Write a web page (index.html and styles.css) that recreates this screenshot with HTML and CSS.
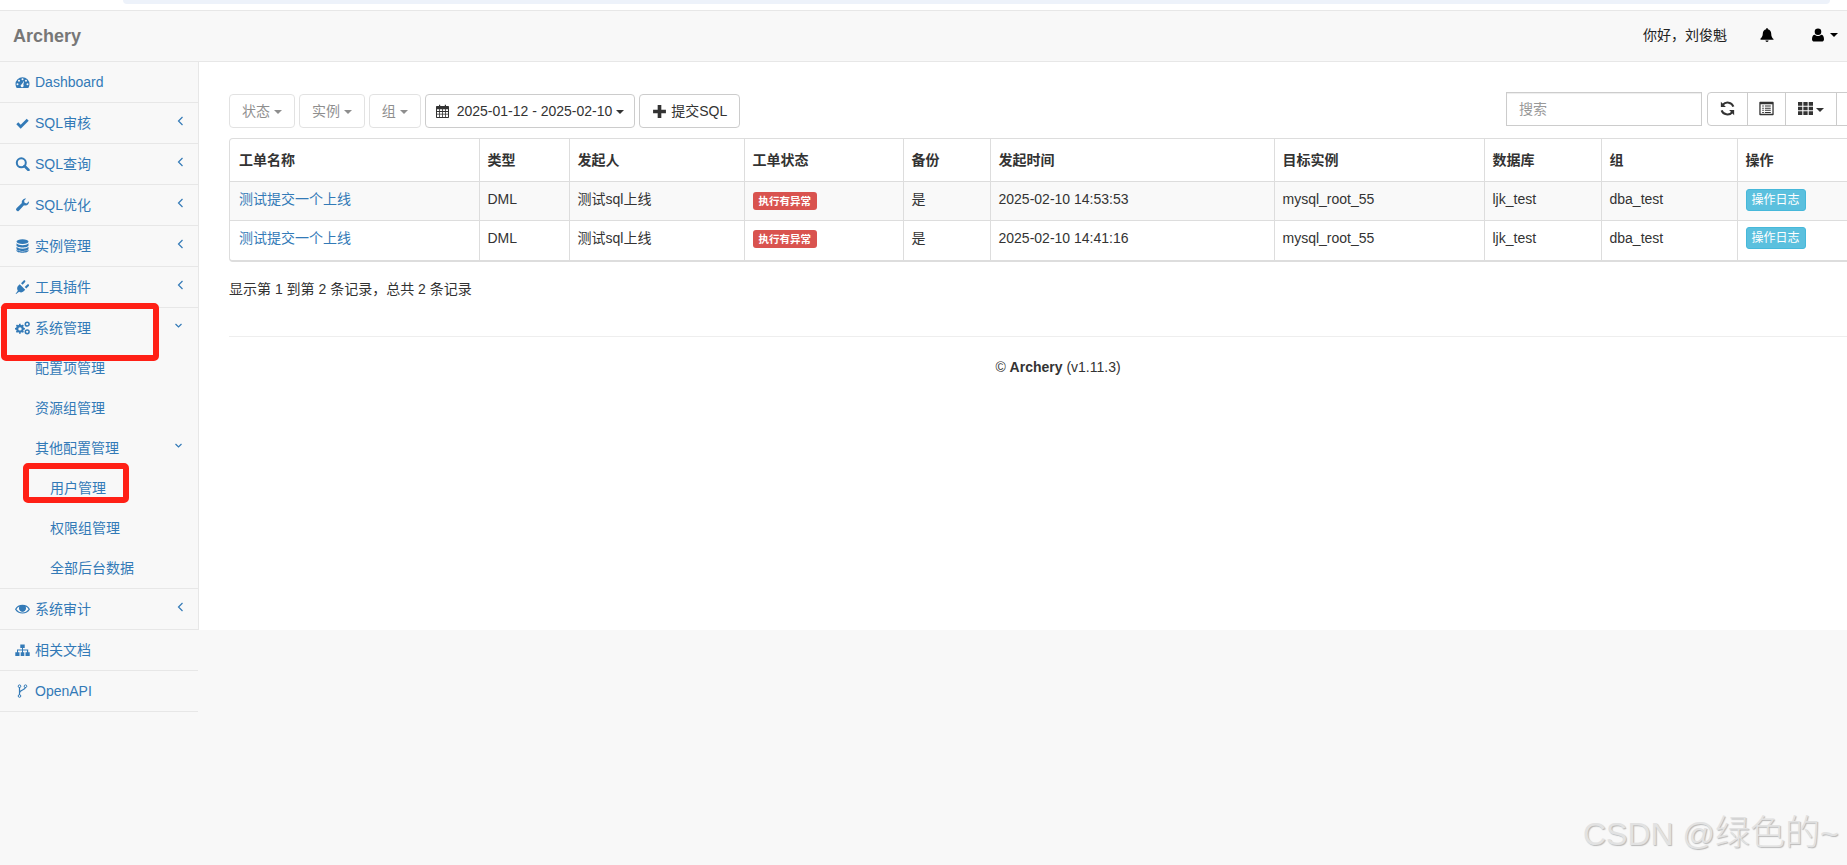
FILE: index.html
```html
<!DOCTYPE html>
<html lang="zh-CN">
<head>
  <meta charset="UTF-8" />
  <title>Archery</title>
  <link rel="stylesheet" href="styles.css">
</head>
<body>
  <svg class="sprite" xmlns="http://www.w3.org/2000/svg">
    <symbol id="i-dash" viewBox="0 0 14 14"><path fill-rule="evenodd" d="M0 9.2a7 7 0 0 1 14 0c0 1.300-.4 2.500-1 3.500-.2.300-.4.300-.7.300H1.700c-.3 0-.5 0-.7-.3-.6-1-1-2.200-1-3.500zM2 8.200a1 1 0 1 0 0 2 1 1 0 0 0 0-2zM3.500 4.800a1 1 0 1 0 0 2 1 1 0 0 0 0-2zM7 3.300a1 1 0 1 0 0 2 1 1 0 0 0 0-2zM10.500 4.800a1 1 0 1 0 0 2 1 1 0 0 0 0-2zM12 8.200a1 1 0 1 0 0 2 1 1 0 0 0 0-2zM8.700 5.500L6.300 9.300a1.500 1.500 0 1 0 1.500.5z"/></symbol>
    <symbol id="i-check" viewBox="0 0 14 14"><path d="M1.800 7.300L5.200 10.700 12.200 3.700" fill="none" stroke="currentColor" stroke-width="2.800"/></symbol>
    <symbol id="i-search" viewBox="0 0 14 14"><circle cx="5.800" cy="5.800" r="4.500" fill="none" stroke="currentColor" stroke-width="2"/><path d="M9 9l4 4" stroke="currentColor" stroke-width="2.500" stroke-linecap="round"/></symbol>
    <symbol id="i-wrench" viewBox="0 0 14 14"><path d="M13.500 3.200c.3 2.300-1.500 4.400-3.800 4.300-.4 0-.8-.1-1.200-.2L3.400 12.700a1.700 1.700 0 0 1-2.400-.1 1.700 1.700 0 0 1 0-2.300l5.400-5.200C5.800 2.700 8 .4 10.600.6l-2 2.200.5 2 2 .6z"/></symbol>
    <symbol id="i-db" viewBox="0 0 14 14"><ellipse cx="7" cy="2.600" rx="6" ry="2.400"/><path d="M1 4.200c1 1.300 3.500 2 6 2s5-.7 6-2v2c0 1.300-2.700 2.300-6 2.300S1 7.500 1 6.200zM1 7.700c1 1.300 3.500 2 6 2s5-.7 6-2v2c0 1.300-2.700 2.300-6 2.300S1 11 1 9.700zM1 10.800c1 1.300 3.500 1.700 6 1.700s5-.4 6-1.700v.7c0 1.300-2.700 2.300-6 2.300s-6-1-6-2.300z"/></symbol>
    <symbol id="i-plug" viewBox="0 0 14 14"><path d="M0 14l2.300-3.300C1.200 9 1.500 7 2.700 5.800l1.500-1.500 5.500 5.500-1.500 1.500c-1.200 1.200-3 1.500-4.600.5L.6 14zM5.500 3.300L8 .7c.5-.5 1.200-.5 1.600-.1s.4 1.100 0 1.500L7.100 4.800zM9.200 7l2.600-2.500c.4-.4 1.100-.4 1.500 0s.4 1.100 0 1.600L10.800 8.600z"/></symbol>
    <symbol id="i-cogs" viewBox="0 0 15 14"><path fill-rule="evenodd" d="M4 3l1.300-.4.400 1.200 1.100.4 1-.7 1 1-.6 1.100.5 1.200 1.200.2v1.400l-1.200.3-.5 1.100.7 1-1 1-1.100-.6-1.100.4-.3 1.300H4.400l-.3-1.300-1.100-.4-1.100.6-1-1 .7-1-.5-1.100L0 8.400V7l1.100-.2.500-1.200L1 4.500l1-1 1 .7 1-.4zM5 6.200a1.700 1.700 0 1 0 0 3.400 1.700 1.700 0 0 0 0-3.400z"/><circle cx="12.200" cy="3.200" r="1.900" fill="none" stroke="currentColor" stroke-width="1.500"/><circle cx="12.200" cy="10.800" r="1.900" fill="none" stroke="currentColor" stroke-width="1.500"/></symbol>
    <symbol id="i-eye" viewBox="0 0 15 14"><path fill-rule="evenodd" d="M0 7.200C1.600 4.300 4.300 2.800 7.500 2.800s5.900 1.500 7.500 4.400c-1.600 2.900-4.300 4.400-7.500 4.400S1.600 10.100 0 7.200zM1.400 7.200c1.400 2 3.600 3.300 6.100 3.300s4.700-1.300 6.100-3.300c-.8-1.200-1.800-2.100-3-2.600a3.500 3.500 0 1 1-6.200 0c-1.200.5-2.200 1.400-3 2.600z"/><circle cx="7.500" cy="6.600" r="3"/></symbol>
    <symbol id="i-map" viewBox="0 0 15 14"><path d="M5.300 1.500h4.400v3.400H8v1.600h5.200v2.800h1.500V13h-4.200V9.300H12V7.500H8v1.800h1.300V13H5.700V9.300H7V7.500H3v1.800h1.500V13H.3V9.300h1.700V6.500H7V4.900H5.300z"/></symbol>
    <symbol id="i-fork" viewBox="0 0 14 14"><path d="M4 3v8M10 3c0 3.500-6 2.500-6 6" fill="none" stroke="currentColor" stroke-width="1.200"/><circle cx="4" cy="2.200" r="1.300" fill="none" stroke="currentColor"/><circle cx="4" cy="12" r="1.300" fill="none" stroke="currentColor"/><circle cx="10" cy="2.200" r="1.300" fill="none" stroke="currentColor"/></symbol>
    <symbol id="i-left" viewBox="0 0 10 10"><path d="M7.500 1L3.500 5l4 4" fill="none" stroke="currentColor" stroke-width="1.200"/></symbol>
    <symbol id="i-down" viewBox="0 0 10 10"><path d="M.5 3l3 3 3-3" fill="none" stroke="currentColor" stroke-width="1.200"/></symbol>
    <symbol id="i-bell" viewBox="0 0 14 14"><path d="M7 0c.5 0 .8.300.8.800v.5c2 .4 3.400 2 3.400 4.200 0 3.200 1 4.400 2.300 5.500v.8H.5V10.500C1.800 9.400 2.800 8.200 2.800 5.500c0-2.200 1.400-3.800 3.400-4.200V.8C6.200.3 6.500 0 7 0zM5.400 12.500h3.200A1.600 1.600 0 0 1 7 14a1.600 1.600 0 0 1-1.600-1.500z"/></symbol>
    <symbol id="i-user" viewBox="0 0 12 14"><circle cx="6" cy="3.800" r="3.300"/><path d="M0 11.200c0-2.700 1-4.500 2.800-4.500C3.700 7.500 4.800 8 6 8s2.300-.5 3.200-1.300C11 6.700 12 8.500 12 11.200c0 1.600-1 2.300-2.300 2.300H2.300C1 13.500 0 12.800 0 11.200z"/></symbol>
    <symbol id="i-cal" viewBox="0 0 13 14"><path fill-rule="evenodd" d="M1 2h2V.8h1.200V2h4.600V.8H10V2h2c.6 0 1 .4 1 1v10c0 .6-.4 1-1 1H1c-.6 0-1-.4-1-1V3c0-.6.400-1 1-1zM1 5.200v1.900h2.200V5.200zM4 5.200v1.900h2.100V5.200zM6.900 5.200v1.900H9V5.200zM9.800 5.200v1.900H12V5.200zM1 7.900v1.900h2.200V7.900zM4 7.900v1.900h2.100V7.900zM6.900 7.900v1.900H9V7.900zM9.800 7.900v1.900H12V7.900zM1 10.600V13h2.200v-2.400zM4 10.600V13h2.100v-2.400zM6.900 10.600V13H9v-2.400zM9.800 10.600V13H12v-2.400z"/></symbol>
    <symbol id="i-plus" viewBox="0 0 14 14"><path d="M5.300 1h3.400v4.300H13v3.400H8.700V13H5.300V8.700H1V5.300h4.300z"/></symbol>
    <symbol id="i-refresh" viewBox="0 0 14 14"><path d="M12.500 5.300A5.800 5.800 0 0 0 2.600 3.500M1.500 8.700a5.800 5.800 0 0 0 9.900 1.800" fill="none" stroke="currentColor" stroke-width="1.900"/><path d="M.8.800v4.700h4.700zM13.200 13.200V8.500H8.500z"/></symbol>
    <symbol id="i-list" viewBox="0 0 14 14"><path fill-rule="evenodd" d="M1 .8h12c.4 0 .7.300.7.700v11c0 .4-.3.700-.7.700H1c-.4 0-.7-.3-.7-.7v-11c0-.4.300-.7.700-.7zM1.500 3v9h11V3zM3 4.200h1.500v1H3zM5.500 4.200H11v1H5.500zM3 6.200h1.500v1H3zM5.500 6.200H11v1H5.500zM3 8.200h1.500v1H3zM5.500 8.200H11v1H5.500zM3 10.200h1.500v1H3zM5.500 10.200H11v1H5.500z"/></symbol>
    <symbol id="i-th" viewBox="0 0 14 14"><path d="M0 1h4v3.500H0zM5 1h4v3.500H5zM10 1h4v3.500h-4zM0 5.300h4v3.400H0zM5 5.300h4v3.400H5zM10 5.300h4v3.400h-4zM0 9.500h4V13H0zM5 9.500h4V13H5zM10 9.500h4V13h-4z"/></symbol>
  </svg>

  <div class="tab-strip"><div class="tab-strip-bar"></div></div>

  <!-- top bar -->
  <nav class="navbar">
    <span class="brand">Archery</span>
    <div class="nav-right">
      <span>你好，刘俊魁</span>
      <svg class="nav-bell"><use href="#i-bell"/></svg>
      <span class="nav-user"><svg class="nav-user-icon"><use href="#i-user"/></svg><i class="caret caret-dark"></i></span>
    </div>
  </nav>

  <div class="page">
    <!-- left menu -->
    <ul class="side-menu">
      <li><a class="side-link"><svg class="side-icon"><use href="#i-dash"/></svg>Dashboard</a></li>
      <li><a class="side-link"><svg class="side-icon"><use href="#i-check"/></svg>SQL审核<svg class="arrow"><use href="#i-left"/></svg></a></li>
      <li><a class="side-link"><svg class="side-icon"><use href="#i-search"/></svg>SQL查询<svg class="arrow"><use href="#i-left"/></svg></a></li>
      <li><a class="side-link"><svg class="side-icon"><use href="#i-wrench"/></svg>SQL优化<svg class="arrow"><use href="#i-left"/></svg></a></li>
      <li><a class="side-link"><svg class="side-icon"><use href="#i-db"/></svg>实例管理<svg class="arrow"><use href="#i-left"/></svg></a></li>
      <li><a class="side-link"><svg class="side-icon"><use href="#i-plug"/></svg>工具插件<svg class="arrow"><use href="#i-left"/></svg></a></li>
      <li>
        <a class="side-link"><svg class="side-icon"><use href="#i-cogs"/></svg>系统管理<svg class="arrow"><use href="#i-down"/></svg></a>
        <a class="side-link sub">配置项管理</a>
        <a class="side-link sub">资源组管理</a>
        <a class="side-link sub">其他配置管理<svg class="arrow"><use href="#i-down"/></svg></a>
        <a class="side-link sub2">用户管理</a>
        <a class="side-link sub2">权限组管理</a>
        <a class="side-link sub2">全部后台数据</a>
      </li>
      <li><a class="side-link"><svg class="side-icon"><use href="#i-eye"/></svg>系统审计<svg class="arrow"><use href="#i-left"/></svg></a></li>
      <li><a class="side-link"><svg class="side-icon"><use href="#i-map"/></svg>相关文档</a></li>
      <li><a class="side-link"><svg class="side-icon"><use href="#i-fork"/></svg>OpenAPI</a></li>
    </ul>

    <main class="main">
      <div class="content">
        <div class="toolbar">
          <div class="toolbar-left">
            <button class="btn btn-off">状态 <i class="caret"></i></button>
            <button class="btn btn-off">实例 <i class="caret"></i></button>
            <button class="btn btn-off">组 <i class="caret"></i></button>
            <button class="btn btn-date"><svg class="btn-cal"><use href="#i-cal"/></svg>2025-01-12 - 2025-02-10 <i class="caret"></i></button>
            <button class="btn"><svg class="btn-plus"><use href="#i-plus"/></svg>提交SQL</button>
          </div>
          <div class="toolbar-right">
            <input class="search" type="text" placeholder="搜索" />
            <div class="btn-group">
              <button class="btn btn-refresh"><svg class="btn-icon"><use href="#i-refresh"/></svg></button>
              <button class="btn btn-list"><svg class="btn-icon"><use href="#i-list"/></svg></button>
              <button class="btn btn-cols"><svg class="btn-icon"><use href="#i-th"/></svg> <i class="caret"></i></button>
              <button class="btn btn-more"></button>
            </div>
          </div>
        </div>

        <div class="table-box">
          <table class="orders">
            <colgroup>
              <col class="c-name"><col class="c-type"><col class="c-user"><col class="c-state"><col class="c-backup">
              <col class="c-time"><col class="c-inst"><col class="c-db"><col class="c-group"><col class="c-op">
            </colgroup>
            <thead>
              <tr><th>工单名称</th><th>类型</th><th>发起人</th><th>工单状态</th><th>备份</th><th>发起时间</th><th>目标实例</th><th>数据库</th><th>组</th><th>操作</th></tr>
            </thead>
            <tbody>
              <tr>
                <td><a class="link">测试提交一个上线</a></td><td>DML</td><td>测试sql上线</td>
                <td><span class="label">执行有异常</span></td><td>是</td><td>2025-02-10 14:53:53</td>
                <td>mysql_root_55</td><td>ljk_test</td><td>dba_test</td><td><span class="log-btn">操作日志</span></td>
              </tr>
              <tr>
                <td><a class="link">测试提交一个上线</a></td><td>DML</td><td>测试sql上线</td>
                <td><span class="label">执行有异常</span></td><td>是</td><td>2025-02-10 14:41:16</td>
                <td>mysql_root_55</td><td>ljk_test</td><td>dba_test</td><td><span class="log-btn">操作日志</span></td>
              </tr>
            </tbody>
          </table>
        </div>

        <div class="page-info">显示第 1 到第 2 条记录，总共 2 条记录</div>

        <footer class="footer">© <strong>Archery</strong> (v1.11.3)</footer>
      </div>
    </main>
  </div>

  <!-- marks drawn over the screenshot -->
  <div class="mark mark-menu"></div>
  <div class="mark mark-user"></div>
  <div class="watermark">CSDN @<span class="watermark-cjk">绿色的</span>~</div>
</body>
</html>
```

FILE: styles.css
```css
* {
  box-sizing: border-box;
}

html, body {
  height: 100%;
}

body {
  margin: 0;
  height: 865px;
  overflow: hidden;
  position: relative;
  font-family: "Liberation Sans", "Noto Sans CJK SC", sans-serif;
  font-size: 14px;
  line-height: 20px;
  color: #333;
  background: #f8f8f8;
}

.sprite {
  display: none;
}

svg {
  fill: currentColor;
}

.tab-strip {
  height: 10px;
  background: #fff;
  padding: 0 17px 0 123px;
}

.tab-strip-bar {
  height: 4px;
  background: #edf2fa;
  border-radius: 0 0 8px 8px;
}

.navbar {
  height: 52px;
  display: flex;
  align-items: center;
  justify-content: space-between;
  padding: 0 9px 2px 13px;
  background: #f8f8f8;
  border-top: 1px solid #e7e7e7;
  border-bottom: 1px solid #e7e7e7;
}

.brand {
  margin-top: 2px;
  font-size: 18px;
  font-weight: bold;
  color: #777;
}

.nav-right {
  display: flex;
  align-items: center;
  color: #222;
}

.nav-bell {
  width: 14px;
  height: 14px;
  margin-left: 33px;
  color: #000;
}

.nav-user {
  display: flex;
  align-items: center;
  margin-left: 38px;
}

.nav-user-icon {
  width: 12px;
  height: 14px;
  margin-right: 6px;
  color: #000;
}

.caret {
  display: inline-block;
  width: 0;
  height: 0;
  vertical-align: middle;
  border-top: 4px solid currentColor;
  border-left: 4px solid transparent;
  border-right: 4px solid transparent;
}

.caret-dark {
  color: #000;
}

.page {
  display: flex;
  align-items: flex-start;
}

/* left menu */
.side-menu {
  width: 198px;
  flex-shrink: 0;
  margin: 0;
  padding: 0;
  list-style: none;
}

.side-menu > li {
  border-bottom: 1px solid #e7e7e7;
}

.side-link {
  display: flex;
  align-items: center;
  height: 40px;
  padding: 0 13px 0 15px;
  color: #337ab7;
}

.side-icon {
  width: 15px;
  height: 14px;
  margin-right: 5px;
  flex-shrink: 0;
}

.arrow {
  width: 10px;
  height: 10px;
  margin-left: auto;
  margin-bottom: 5px;
}

.sub {
  padding-left: 35px;
}

.sub2 {
  padding-left: 50px;
}

/* main area */
.main {
  flex: 1;
  min-width: 0;
  height: 568px;
  overflow: hidden;
  background: #fff;
  border-left: 1px solid #e7e7e7;
}

.content {
  width: 1658px;
  margin-left: 30px;
  padding-top: 30px;
}

.toolbar {
  display: flex;
  justify-content: space-between;
  margin-bottom: 10px;
}

.toolbar-left {
  display: flex;
  gap: 4px;
  margin-top: 2px;
}

.toolbar-right {
  display: flex;
  gap: 5px;
  height: 34px;
}

.btn {
  height: 34px;
  padding: 0 12px;
  font: inherit;
  color: #333;
  background: #fff;
  border: 1px solid #ccc;
  border-radius: 4px;
  white-space: nowrap;
}

.btn-off {
  color: #333;
  opacity: 0.55;
}

.btn-date {
  padding: 0 10px;
}

.btn-cal {
  width: 13px;
  height: 14px;
  margin-right: 8px;
  vertical-align: -2px;
}

.btn-plus {
  width: 15px;
  height: 15px;
  margin-right: 4px;
  vertical-align: -3px;
}

.btn-icon {
  width: 15px;
  height: 15px;
  vertical-align: -2px;
}

.search {
  width: 196px;
  height: 34px;
  padding: 0 12px;
  font: inherit;
  color: #555;
  border: 1px solid #ccc;
  box-shadow: inset 0 1px 1px rgba(0,0,0,.075);
  outline: none;
}

.search::placeholder {
  color: #999;
}

.btn-group {
  display: flex;
}

.btn-group .btn {
  border-radius: 0;
  margin-left: -1px;
  padding: 0;
}

.btn-group .btn:first-child {
  border-radius: 4px 0 0 4px;
  margin-left: 0;
}

.btn-refresh {
  width: 41px;
}

.btn-list {
  width: 39px;
}

.btn-cols {
  width: 52px;
}

.btn-more {
  width: 51px;
}

/* table */
.table-box {
  border: 1px solid #ddd;
  border-bottom-width: 2px;
  border-radius: 4px 0 0 4px;
  overflow: hidden;
}

.orders {
  width: 100%;
  table-layout: fixed;
  border-collapse: collapse;
}

.c-name { width: 249px; }
.c-type { width: 90px; }
.c-user { width: 175px; }
.c-state { width: 159px; }
.c-backup { width: 87px; }
.c-time { width: 284px; }
.c-inst { width: 210px; }
.c-db { width: 117px; }
.c-group { width: 136px; }
.c-op { width: 149px; }

.orders th, .orders td {
  padding: 0 8px;
  text-align: left;
  white-space: nowrap;
  border-left: 1px solid #ddd;
}

.orders th:first-child, .orders td:first-child {
  border-left: none;
  padding-left: 9px;
}

.orders th {
  height: 42px;
  font-weight: bold;
  border-bottom: 1px solid #ddd;
}

.orders td {
  height: 39px;
  padding-bottom: 3px;
  border-top: 1px solid #ddd;
}

.orders thead + tbody tr:first-child td {
  border-top: none;
}

.orders tbody tr:first-child {
  background: #f9f9f9;
}

.orders tbody tr:last-child td {
  height: 40px;
  padding-bottom: 5px;
}

.link {
  color: #337ab7;
}

.label {
  display: inline-block;
  height: 18px;
  padding: 0 6px;
  font-size: 10.5px;
  font-weight: bold;
  line-height: 18px;
  color: #fff;
  background: #d9534f;
  border-radius: 3px;
  vertical-align: middle;
  margin-top: 2px;
}

.log-btn {
  display: inline-block;
  height: 22px;
  padding: 0 5px;
  font-size: 12px;
  line-height: 20px;
  color: #fff;
  background: #5bc0de;
  border: 1px solid #46b8da;
  border-radius: 3px;
  vertical-align: middle;
  margin-top: 1px;
}

.page-info {
  margin-top: 17px;
}

.footer {
  margin-top: 37px;
  padding-top: 20px;
  text-align: center;
  border-top: 1px solid #eee;
}

/* red marks */
.mark {
  position: absolute;
  border: 6px solid #ff2016;
  border-radius: 5px;
}

.mark-menu {
  left: 1px;
  top: 303px;
  width: 158px;
  height: 58px;
}

.mark-user {
  left: 23px;
  top: 463px;
  width: 106px;
  height: 40px;
}

.watermark {
  position: absolute;
  left: 1583px;
  top: 811px;
  font-size: 32px;
  line-height: 44px;
  white-space: nowrap;
  color: #e2e2e2;
  text-shadow: 1px 1px 1px #b8b8b8;
}

.watermark-cjk {
  font-size: 35px;
  font-weight: 300;
}
```
